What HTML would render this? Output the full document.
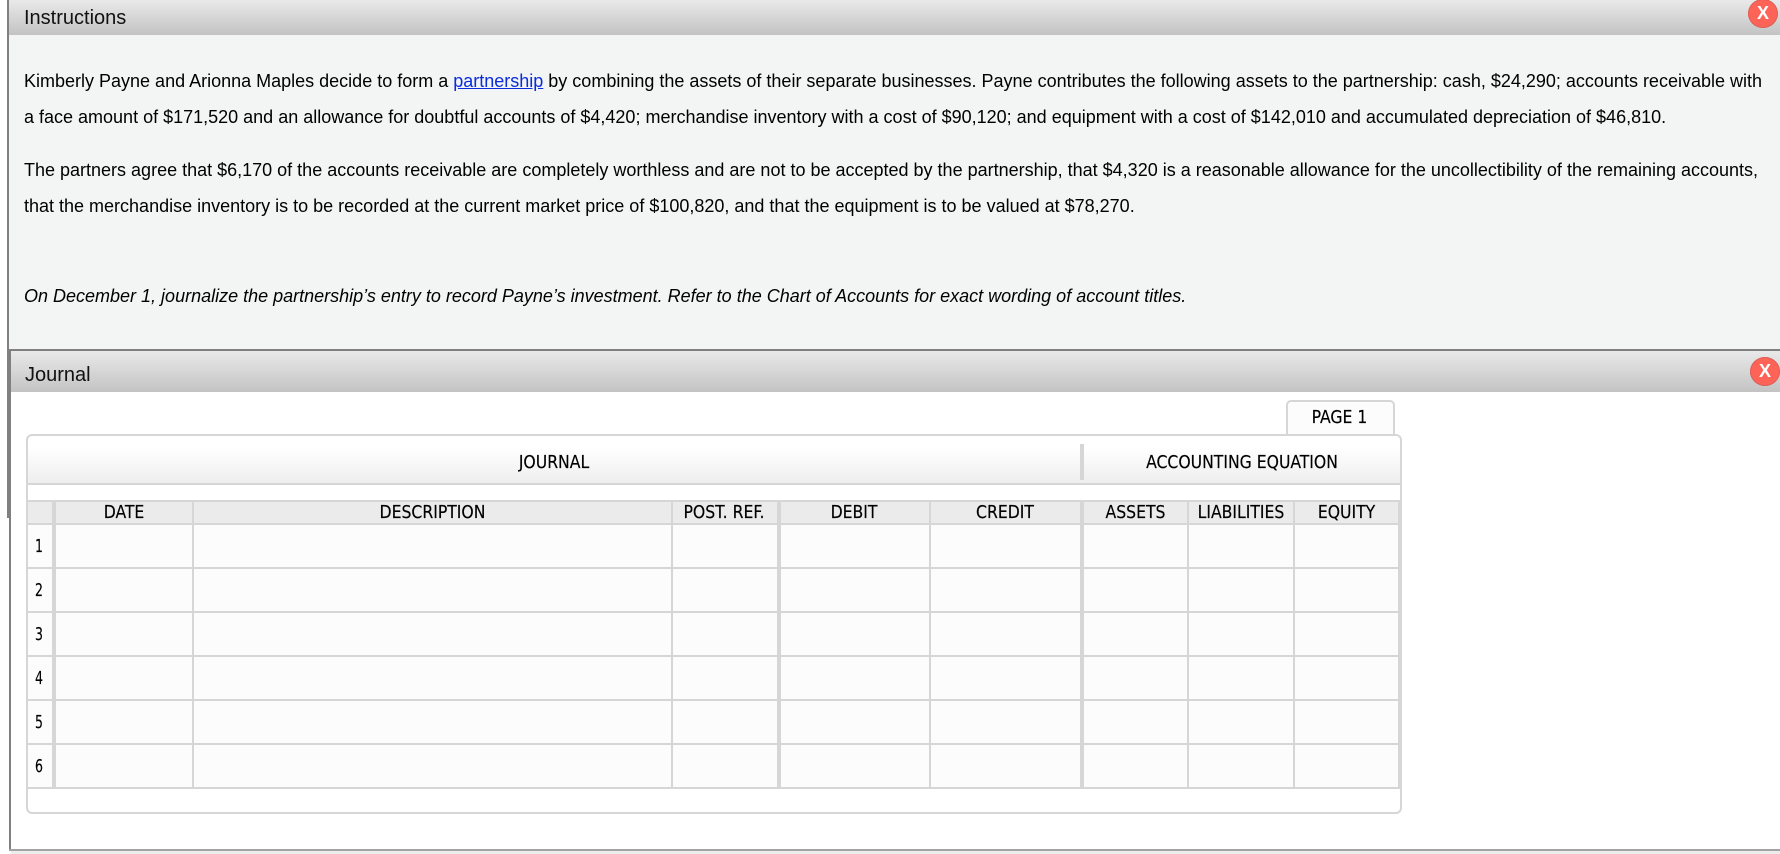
<!DOCTYPE html>
<html><head><meta charset="utf-8"><title>Instructions and Journal</title>
<style>
html,body{margin:0;padding:0;width:1780px;height:854px;overflow:hidden;background:#fff}
div,a,span{position:absolute}
.t{font-family:"Liberation Sans",Arial,sans-serif;color:#000;white-space:nowrap;font-size:18px;line-height:20px;left:24px}
.hd{background:linear-gradient(#e9e9e9,#c3c3c3)}
.ht{font-family:"Liberation Sans",Arial,sans-serif;font-size:20px;line-height:22px;color:#111;white-space:nowrap}
.x{width:30px;height:29px;border-radius:50%;background:#fd6457;box-shadow:inset 0 0 0 1px #d9625a;color:#fff;font-family:"Liberation Sans",sans-serif;font-weight:bold;font-size:18px;line-height:29px;text-align:center}
.l{background:#d6d6d6}
.c{font-family:"DejaVu Sans Condensed","DejaVu Sans",sans-serif;font-stretch:condensed;font-size:17.4px;line-height:20px;color:#000;-webkit-text-stroke:.15px #000;text-align:center;white-space:nowrap}
.n{transform:scaleX(.8)}
</style></head><body>
<div style="left:7px;top:0;width:2px;height:518px;background:#808080"></div>
<div style="left:9px;top:0;width:1771px;height:350px;background:#f3f5f5"></div>
<div class="hd" style="left:9px;top:0;width:1771px;height:35px"></div>
<div class="ht" style="left:24px;top:7px">Instructions</div>
<div class="x" style="left:1748px;top:-1px">X</div>

<div class="t" style="top:71px">Kimberly Payne and Arionna Maples decide to form a <a href="#" style="position:static;color:#0a2cdb;text-decoration:underline">partnership</a> by combining the assets of their separate businesses. Payne contributes the following assets to the partnership: cash, $24,290; accounts receivable with</div>
<div class="t" style="top:107px">a face amount of $171,520 and an allowance for doubtful accounts of $4,420; merchandise inventory with a cost of $90,120; and equipment with a cost of $142,010 and accumulated depreciation of $46,810.</div>
<div class="t" style="top:160px">The partners agree that $6,170 of the accounts receivable are completely worthless and are not to be accepted by the partnership, that $4,320 is a reasonable allowance for the uncollectibility of the remaining accounts,</div>
<div class="t" style="top:196px">that the merchandise inventory is to be recorded at the current market price of $100,820, and that the equipment is to be valued at $78,270.</div>
<div class="t" style="top:286px;font-style:italic">On December 1, journalize the partnership’s entry to record Payne’s investment. Refer to the Chart of Accounts for exact wording of account titles.</div>

<div style="left:9px;top:349px;width:1771px;height:2px;background:#808080"></div>
<div style="left:9px;top:351px;width:2px;height:498px;background:#808080"></div>
<div class="hd" style="left:11px;top:351px;width:1769px;height:41px"></div>
<div class="ht" style="left:25px;top:364px">Journal</div>
<div class="x" style="left:1750px;top:357px">X</div>

<div style="left:1286px;top:400px;width:105px;height:35px;border:2px solid #d6d6d6;border-bottom:0;border-radius:5px 5px 0 0;background:#fcfcfc"></div>
<div class="c" style="left:1285px;top:408px;width:109px">PAGE 1</div>

<div style="left:26px;top:434px;width:1372px;height:376px;border:2px solid #d6d6d6;border-radius:6px;background:#fff"></div>
<div style="left:28px;top:436px;width:1372px;height:47px;border-radius:5px 5px 0 0;background:linear-gradient(#fff 25%,#eeeeee)"></div>
<div class="l" style="left:28px;top:483px;width:1372px;height:2px"></div>
<div class="l" style="left:1080px;top:444px;width:4px;height:36px"></div>
<div class="c" style="left:28px;top:453px;width:1052px">JOURNAL</div>
<div class="c" style="left:1084px;top:453px;width:316px">ACCOUNTING EQUATION</div>

<div style="left:28px;top:502px;width:1370px;height:21px;background:#ebebeb"></div>
<div style="left:28px;top:525px;width:1370px;height:263px;background:#fcfcfc"></div>

<div class="l" style="left:28px;top:500px;width:1372px;height:2px"></div>
<div class="l" style="left:28px;top:523px;width:1372px;height:2px"></div>
<div class="l" style="left:28px;top:567px;width:1372px;height:2px"></div>
<div class="l" style="left:28px;top:611px;width:1372px;height:2px"></div>
<div class="l" style="left:28px;top:655px;width:1372px;height:2px"></div>
<div class="l" style="left:28px;top:699px;width:1372px;height:2px"></div>
<div class="l" style="left:28px;top:743px;width:1372px;height:2px"></div>
<div class="l" style="left:28px;top:787px;width:1372px;height:2px"></div>

<div class="l" style="left:52px;top:500px;width:4px;height:289px"></div>
<div class="l" style="left:192px;top:500px;width:2px;height:289px"></div>
<div class="l" style="left:671px;top:500px;width:2px;height:289px"></div>
<div class="l" style="left:777px;top:500px;width:4px;height:289px"></div>
<div class="l" style="left:929px;top:500px;width:2px;height:289px"></div>
<div class="l" style="left:1080px;top:500px;width:4px;height:289px"></div>
<div class="l" style="left:1187px;top:500px;width:2px;height:289px"></div>
<div class="l" style="left:1293px;top:500px;width:2px;height:289px"></div>
<div class="l" style="left:1398px;top:500px;width:2px;height:289px"></div>

<div class="c" style="left:56px;top:503px;width:136px">DATE</div>
<div class="c" style="left:194px;top:503px;width:477px">DESCRIPTION</div>
<div class="c" style="left:672px;top:503px;width:104px">POST. REF.</div>
<div class="c" style="left:780px;top:503px;width:148px">DEBIT</div>
<div class="c" style="left:931px;top:503px;width:148px">CREDIT</div>
<div class="c" style="left:1084px;top:503px;width:103px">ASSETS</div>
<div class="c" style="left:1189px;top:503px;width:104px">LIABILITIES</div>
<div class="c" style="left:1295px;top:503px;width:103px">EQUITY</div>

<div class="c n" style="left:27px;top:537px;width:24px">1</div>
<div class="c n" style="left:27px;top:581px;width:24px">2</div>
<div class="c n" style="left:27px;top:625px;width:24px">3</div>
<div class="c n" style="left:27px;top:669px;width:24px">4</div>
<div class="c n" style="left:27px;top:713px;width:24px">5</div>
<div class="c n" style="left:27px;top:757px;width:24px">6</div>

<div style="left:9px;top:849px;width:1771px;height:2px;background:#a3a3a3"></div>
<div style="left:11px;top:851px;width:1769px;height:3px;background:#ececec"></div>
</body></html>
